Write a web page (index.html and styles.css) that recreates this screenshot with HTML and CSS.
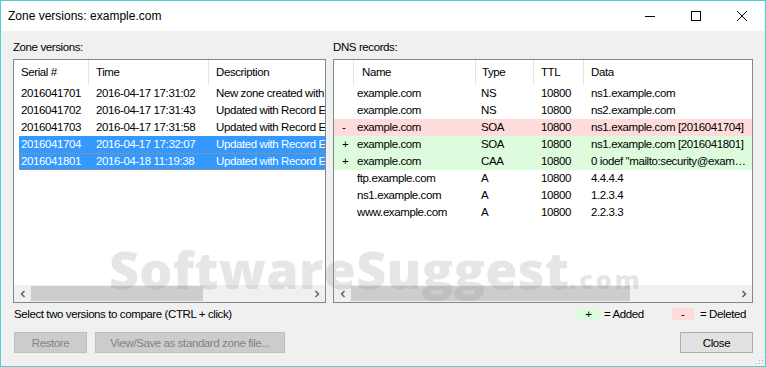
FILE: index.html
```html
<!DOCTYPE html>
<html>
<head>
<meta charset="utf-8">
<link rel="stylesheet" href="styles.css">
</head>
<body>
<div class="window">
  <div class="titlebar">
    <span class="title">Zone versions: example.com</span>
    <div class="controls">
      <span class="ctl"><svg width="12" height="12" viewBox="0 0 12 12"><path d="M1 6.5H11" stroke="#000" stroke-width="1"/></svg></span>
      <span class="ctl"><svg width="12" height="12" viewBox="0 0 12 12"><rect x="1.5" y="1.5" width="9" height="9" fill="none" stroke="#000" stroke-width="1"/></svg></span>
      <span class="ctl"><svg width="12" height="12" viewBox="0 0 12 12"><path d="M1 1L11 11M11 1L1 11" stroke="#000" stroke-width="1"/></svg></span>
    </div>
  </div>
  <div class="content">
    <div class="panes">
      <div class="pane">
        <div class="label">Zone versions:</div>
        <div class="list">
          <div class="lhead">
            <div class="hc" style="width:75px">Serial #</div>
            <div class="hc" style="width:120px">Time</div>
            <div class="hc last">Description</div>
          </div>
          <div class="rows">
            <div class="row vrow"><span class="c1">2016041701</span><span class="c2">2016-04-17 17:31:02</span><span class="c3">New zone created with defaults</span></div>
            <div class="row vrow"><span class="c1">2016041702</span><span class="c2">2016-04-17 17:31:43</span><span class="c3">Updated with Record Editor</span></div>
            <div class="row vrow"><span class="c1">2016041703</span><span class="c2">2016-04-17 17:31:58</span><span class="c3">Updated with Record Editor</span></div>
            <div class="row vrow sel"><span class="c1">2016041704</span><span class="c2">2016-04-17 17:32:07</span><span class="c3">Updated with Record Editor</span></div>
            <div class="row vrow sel focus"><span class="c1">2016041801</span><span class="c2">2016-04-18 11:19:38</span><span class="c3">Updated with Record Editor</span></div>
          </div>
          <div class="hscroll">
            <span class="arr"><svg width="8" height="8" viewBox="0 0 8 8"><path d="M5.5 1L2.5 4L5.5 7" fill="none" stroke="#606060" stroke-width="1.5"/></svg></span>
            <div class="track"><div class="thumb" style="width:172px"></div></div>
            <span class="arr"><svg width="8" height="8" viewBox="0 0 8 8"><path d="M2.5 1L5.5 4L2.5 7" fill="none" stroke="#606060" stroke-width="1.5"/></svg></span>
          </div>
        </div>
      </div>
      <div class="pane">
        <div class="label">DNS records:</div>
        <div class="list">
          <div class="lhead">
            <div class="hc hs"></div>
            <div class="hc" style="width:122px;padding-left:8px">Name</div>
            <div class="hc" style="width:58px;padding-left:6px">Type</div>
            <div class="hc" style="width:50px">TTL</div>
            <div class="hc last">Data</div>
          </div>
          <div class="rows">
            <div class="row drow"><span class="s"></span><span class="n">example.com</span><span class="t">NS</span><span class="l">10800</span><span class="d">ns1.example.com</span></div>
            <div class="row drow"><span class="s"></span><span class="n">example.com</span><span class="t">NS</span><span class="l">10800</span><span class="d">ns2.example.com</span></div>
            <div class="row drow del"><span class="s">-</span><span class="n">example.com</span><span class="t">SOA</span><span class="l">10800</span><span class="d">ns1.example.com [2016041704]</span></div>
            <div class="row drow add"><span class="s">+</span><span class="n">example.com</span><span class="t">SOA</span><span class="l">10800</span><span class="d">ns1.example.com [2016041801]</span></div>
            <div class="row drow add"><span class="s">+</span><span class="n">example.com</span><span class="t">CAA</span><span class="l">10800</span><span class="d">0 iodef "mailto:security@example.com"</span></div>
            <div class="row drow"><span class="s"></span><span class="n">ftp.example.com</span><span class="t">A</span><span class="l">10800</span><span class="d">4.4.4.4</span></div>
            <div class="row drow"><span class="s"></span><span class="n">ns1.example.com</span><span class="t">A</span><span class="l">10800</span><span class="d">1.2.3.4</span></div>
            <div class="row drow"><span class="s"></span><span class="n">www.example.com</span><span class="t">A</span><span class="l">10800</span><span class="d">2.2.3.3</span></div>
          </div>
          <div class="hscroll">
            <span class="arr"><svg width="8" height="8" viewBox="0 0 8 8"><path d="M5.5 1L2.5 4L5.5 7" fill="none" stroke="#606060" stroke-width="1.5"/></svg></span>
            <div class="track"><div class="thumb" style="width:279px"></div></div>
            <span class="arr"><svg width="8" height="8" viewBox="0 0 8 8"><path d="M2.5 1L5.5 4L2.5 7" fill="none" stroke="#606060" stroke-width="1.5"/></svg></span>
          </div>
        </div>
      </div>
    </div>
    <div class="status">
      <span class="hint">Select two versions to compare (CTRL + click)</span>
      <div class="legend">
        <span class="swatch add">+</span><span class="ltext la">= Added</span>
        <span class="swatch del">-</span><span class="ltext ld">= Deleted</span>
      </div>
    </div>
    <div class="buttons">
      <button class="btn dis" style="width:73px">Restore</button>
      <button class="btn dis" style="width:190px">View/Save as standard zone file...</button>
      <span class="spacer"></span>
      <button class="btn" style="width:73px">Close</button>
    </div>
    <div class="watermark">SoftwareSuggest<span class="dotcom">.com</span></div>
    <div class="grip"></div>
  </div>
</div>
</body>
</html>
```
FILE: styles.css
```css
* { box-sizing: border-box; }
html, body { margin: 0; padding: 0; }
body {
  width: 766px; height: 367px; overflow: hidden;
  font-family: "Liberation Sans", Arial, sans-serif;
  font-size: 11.5px; letter-spacing: -0.4px; color: #000;
}
.window {
  width: 766px; height: 367px;
  border: 1px solid #4fcfcf;
  display: flex; flex-direction: column;
  background: #f0f0f0;
}
.titlebar {
  height: 30px; background: #fff;
  display: flex; align-items: center; justify-content: space-between;
  padding-left: 7px;
}
.title { font-size: 12px; letter-spacing: 0; }
.controls { display: flex; height: 100%; }
.ctl { width: 46px; display: flex; align-items: center; justify-content: center; }
.content {
  flex: 1; position: relative;
  padding: 9px 12px 0 12px;
  display: flex; flex-direction: column;
}
.panes { display: grid; grid-template-columns: 313px 420px; column-gap: 7px; }
.label { height: 19px; line-height: 15px; }
.list {
  height: 244px; border: 1px solid #828790; background: #fff;
  display: flex; flex-direction: column; overflow: hidden;
}
.lhead { height: 25px; display: flex; flex: none; }
.hc {
  height: 25px; line-height: 25px; padding-left: 7px;
  border-right: 1px solid #e5e5e5; flex: none; white-space: nowrap;
}
.hc.hs { width: 20px; padding: 0; }
.hc.last { border-right: none; flex: 1; }
.rows { flex: 1; overflow: hidden; }
.row { height: 17px; line-height: 17px; display: flex; white-space: nowrap; }
.vrow { margin-left: 5px; width: 400px; }
.vrow .c1 { width: 70px; padding-left: 2px; flex: none; }
.vrow .c2 { width: 120px; padding-left: 7px; flex: none; }
.vrow .c3 { padding-left: 7px; flex: none; }
.vrow.sel { background: #3399ff; color: #fff; }
.vrow.focus { outline: 1px dotted #e08a2c; outline-offset: -1px; }
.drow .s { width: 20px; padding-left: 8px; flex: none; }
.drow .n { width: 122px; padding-left: 3px; flex: none; }
.drow .t { width: 58px; padding-left: 5px; flex: none; }
.drow .l { width: 50px; padding-left: 7px; flex: none; }
.drow .d { padding-left: 7px; flex: 1; min-width: 0; overflow: hidden; text-overflow: ellipsis; padding-right: 3px; }
.drow.del { background: #ffdcdc; }
.drow.add { background: #ddfcdd; }
.hscroll { height: 17px; flex: none; display: flex; background: #f0f0f0; }
.arr { width: 17px; display: flex; align-items: center; justify-content: center; flex: none; }
.track { flex: 1; padding: 1px 0; }
.thumb { height: 15px; background: #cdcdcd; }
.status {
  margin-top: 3px; height: 16px; line-height: 16px;
  display: flex; justify-content: space-between;
}
.hint { padding-left: 1px; }
.legend { display: flex; align-items: center; }
.swatch { width: 25px; height: 12px; line-height: 12px; text-align: center; letter-spacing: 0; }
.swatch.add { background: #dcfcdc; }
.swatch.del { background: #ffdcdc; width: 22px; }
.ltext.la { width: 71px; padding-left: 3px; }
.ltext.ld { width: 59px; padding-left: 6px; }
.buttons { margin-top: 10px; display: flex; padding-left: 1px; gap: 8px; }
.spacer { flex: 1; }
.btn {
  height: 21px; font-family: inherit; font-size: 11.5px; letter-spacing: -0.4px;
  border: 1px solid #adadad; background: #e1e1e1; color: #000; padding: 0;
}
.btn.dis { background: #cccccc; border-color: #bfbfbf; color: #838383; }
.watermark {
  position: absolute; left: 108px; top: 212px;
  font-family: "Open Sans", "DejaVu Sans", sans-serif; font-weight: 800;
  font-size: 52px; letter-spacing: 0.3px; line-height: 52px;
  color: rgba(140,140,140,0.22); pointer-events: none; white-space: nowrap;
}
.dotcom { font-size: 25px; letter-spacing: 3px; }
.grip {
  position: absolute; right: 2px; bottom: 2px; width: 8px; height: 8px;
  background: radial-gradient(circle, #b8b8b8 0.8px, transparent 1px) 0 0/3px 3px;
  clip-path: polygon(100% 0, 100% 100%, 0 100%);
}
```
